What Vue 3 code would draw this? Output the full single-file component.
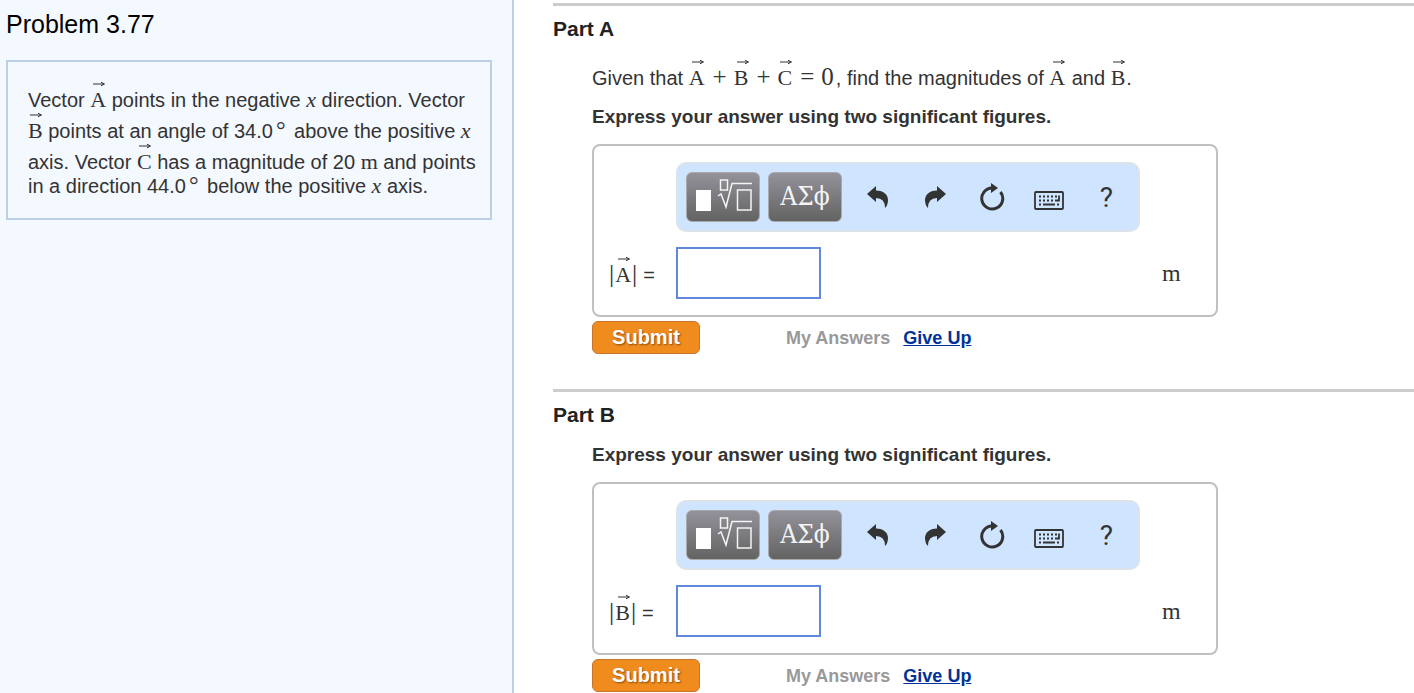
<template>
  <div class="page">
    <aside class="sidebar">
      <h1 class="sidebar__title">Problem 3.77</h1>
      <p class="sidebar__text">
        Vector <span class="vec">A<svg class="vec__arrow" viewBox="0 0 12 6"><path d="M0 3H10M8 1.2L11.5 3L8 4.8" /></svg></span>
        points in the negative <i class="math">x</i> direction. Vector
        <span class="vec">B<svg class="vec__arrow" viewBox="0 0 12 6"><path d="M0 3H10M8 1.2L11.5 3L8 4.8" /></svg></span>
        points at an angle of 34.0<span class="degree">°</span>
        above the positive <i class="math">x</i> axis. Vector
        <span class="vec">C<svg class="vec__arrow" viewBox="0 0 12 6"><path d="M0 3H10M8 1.2L11.5 3L8 4.8" /></svg></span>
        has a magnitude of 20 <span class="math">m</span> and points in a direction 44.0<span class="degree">°</span>
        below the positive <i class="math">x</i> axis.
      </p>
    </aside>

    <main class="content">
      <section v-for="part in parts" :key="part.name" class="part">
        <h2 class="part__title">Part {{ part.name }}</h2>
        <div class="part__body">
          <p v-if="part.name === 'A'" class="part__question">
            Given that
            <span class="equation">
              <template v-for="(letter, i) in ['A', 'B', 'C']" :key="letter">
                <span v-if="i > 0">+</span>
                <span class="vec">{{ letter }}<svg class="vec__arrow" viewBox="0 0 12 6"><path d="M0 3H10M8 1.2L11.5 3L8 4.8" /></svg></span>
              </template>
              <span>=</span><span>0</span>
            </span>, find the magnitudes of
            <span class="vec">A<svg class="vec__arrow" viewBox="0 0 12 6"><path d="M0 3H10M8 1.2L11.5 3L8 4.8" /></svg></span>
            and
            <span class="vec">B<svg class="vec__arrow" viewBox="0 0 12 6"><path d="M0 3H10M8 1.2L11.5 3L8 4.8" /></svg></span>.
          </p>
          <p class="part__hint">Express your answer using two significant figures.</p>

          <form :id="'form-' + part.name" class="answer" @submit.prevent>
            <div class="toolbar">
              <button type="button" class="toolbar__key" aria-label="Templates">
                <svg width="58" height="36" viewBox="0 0 58 36" fill="none" stroke="#f4f4f4" stroke-width="1.5">
                  <rect x="2" y="12" width="15" height="21" fill="#fff" stroke="none" />
                  <rect x="26.500" y="2" width="7" height="10" />
                  <path d="M24 18l3-2 5 13L38 5.500H58" />
                  <rect x="43.500" y="12" width="13.500" height="20" />
                </svg>
              </button>
              <button type="button" class="toolbar__key">ΑΣϕ</button>
              <div class="toolbar__icons">
                <button type="button" class="toolbar__icon" aria-label="Undo">
                  <svg width="22" height="24" viewBox="0 0 22 24"><path d="M0 9L9 1V5.500C17 5.500 21 10 21 15Q21 20 18 23Q18 13 9 13V17Z" /></svg>
                </button>
                <button type="button" class="toolbar__icon" aria-label="Redo">
                  <svg width="22" height="24" viewBox="0 0 22 24"><path d="M22 9L13 1V5.500C5 5.500 1 10 1 15Q1 20 4 23Q4 13 13 13V17Z" /></svg>
                </button>
                <button type="button" class="toolbar__icon" aria-label="Reset">
                  <svg width="26" height="28" viewBox="0 0 26 28">
                    <path d="M13 5A10.500 10.500 0 1 0 21.500 9" fill="none" stroke="#333" stroke-width="3" />
                    <path d="M12 0L19 5L12 10Z" />
                  </svg>
                </button>
                <button type="button" class="toolbar__icon" aria-label="Keyboard">
                  <svg class="keyboard" width="30" height="19" viewBox="0 0 30 19">
                    <rect x="1" y="1" width="28" height="17" rx="1" fill="none" stroke="#333" stroke-width="1.8" />
                    <path d="M5 5.500H23M5 9.500H22M5 13.500H7M23 13.500H25" fill="none" stroke="#333" stroke-width="2" stroke-dasharray="2 2" />
                    <path d="M9 13.500H21M22 9.500H25V4.500" fill="none" stroke="#333" stroke-width="1.8" />
                  </svg>
                </button>
                <button type="button" class="toolbar__icon toolbar__icon--help" aria-label="Help">?</button>
              </div>
            </div>
            <label class="answer__label" :for="'answer-' + part.name">
              <span class="bar">|</span><span class="vec">{{ part.name }}<svg class="vec__arrow" viewBox="0 0 12 6"><path d="M0 3H10M8 1.2L11.5 3L8 4.8" /></svg></span><span class="bar">|</span>
              <span class="equals">=</span>
            </label>
            <input :id="'answer-' + part.name" v-model="part.answer" class="answer__input" type="text">
            <span class="answer__unit">m</span>
          </form>

          <div class="actions">
            <button type="submit" :form="'form-' + part.name" class="actions__submit">Submit</button>
            <span class="actions__answers">My Answers</span>
            <a class="actions__link" href="#">Give Up</a>
          </div>
        </div>
      </section>
    </main>
  </div>
</template>

<script setup>
import { reactive } from 'vue'

const parts = reactive([
  { name: 'A', answer: '' },
  { name: 'B', answer: '' },
])
</script>

<style>
body {
  margin: 0;
  background: #fff;
}
</style>

<style scoped>
.page {
  display: flex;
  min-height: 100vh;
  font-family: "Liberation Sans", Arial, sans-serif;
  font-size: 20px;
  line-height: 24px;
  color: #333;
}
.page * { box-sizing: border-box; }
.sidebar {
  flex: none;
  width: 36.35%;
  padding: 8px 20px 8px 6px;
  background: #f4f8ff;
  border-right: 2px solid #bccfe3;
}
.sidebar__title {
  margin: 0 0 20px;
  font-size: 25px;
  font-weight: 400;
  line-height: 32px;
  color: #000;
}
.sidebar__text {
  margin: 0;
  padding: 19px 6px 20px 20px;
  border: 2px solid #bccfe3;
}
.math,
.vec,
.equation {
  font-family: "Liberation Serif", "Times New Roman", serif;
  font-size: 22px;
  line-height: 24px;
}
.math { line-height: 20px; }
.vec {
  position: relative;
  display: inline-block;
  padding: 7px 0 0;
}
.vec__arrow {
  position: absolute;
  top: 0;
  left: 50%;
  width: 12px;
  height: 6px;
  margin-left: -5px;
  fill: none;
  stroke: #333;
}
.degree {
  margin: 0 3px;
  font-family: "Liberation Serif", "Times New Roman", serif;
  font-size: 24px;
  line-height: 16px;
}
.equation {
  display: inline-flex;
  align-items: baseline;
  gap: 7px;
  padding-right: 2px;
  font-size: 25px;
}

.content {
  flex: 1;
  min-width: 0;
  padding: 3px 0 0 39px;
}
.part {
  padding-bottom: 35px;
  border-top: 3px solid #ccc;
}
.part:last-child { padding-bottom: 0; }
.part__title {
  margin: 0;
  padding: 11px 0;
  font-size: 21px;
  line-height: 24px;
  color: #222;
}
.part__body {
  max-width: 665px;
  padding: 0 0 0 39px;
}
.part__question { margin: 7px 0 10px; }
.part__hint {
  margin: 0 0 15px;
  padding-top: 5px;
  font-size: 19px;
  font-weight: 700;
}
.part__question .vec { padding-right: 1px; }
.answer {
  display: grid;
  grid-template-columns: 82px minmax(0, 464px) auto;
  align-items: center;
  row-gap: 15px;
  padding: 16px 0;
  border: 2px solid #c0c0c0;
  border-radius: 8px;
}
.toolbar {
  grid-column: 2;
  display: flex;
  gap: 8px;
  padding: 8px 3px 8px 8px;
  background: #cfe5ff;
  border: 2px solid #dce3ea;
  border-radius: 10px;
}
.toolbar__key {
  display: flex;
  align-items: center;
  justify-content: center;
  width: 74px;
  height: 50px;
  padding: 0 0 3px;
  border: 1px solid #aaa;
  border-radius: 6px;
  background: linear-gradient(#93929a, #636363);
  font-family: "DejaVu Serif Condensed", "DejaVu Serif", serif;
  font-size: 26px;
  color: #f4f4f4;
}
.toolbar__icons {
  flex: 1;
  display: flex;
}
.toolbar__icon {
  flex: 1;
  display: flex;
  align-items: center;
  justify-content: center;
  padding: 0;
  border: none;
  background: none;
  color: #333;
  fill: #333;
}
.toolbar__icon--help {
  font-family: Roboto, sans-serif;
  font-size: 28px;
}
.keyboard { margin-top: 6px; }
.answer__label {
  grid-column: 1;
  padding: 0 0 4px 15px;
  white-space: nowrap;
}
.answer__label .vec { padding: 7px 1px 0; }
.bar {
  font-family: "Liberation Serif", "Times New Roman", serif;
  font-size: 26px;
}
.equals { margin-left: 6px; }
.answer__input {
  width: 145px;
  height: 52px;
  padding: 0 8px;
  border: 2px solid #6189db;
  font: inherit;
}
.answer__unit {
  padding-left: 22px;
  font-family: "Liberation Serif", "Times New Roman", serif;
  font-size: 24px;
}
.actions {
  display: flex;
  align-items: center;
  margin-top: 4px;
  font-size: 18px;
  font-weight: 700;
}
.actions__submit {
  width: 108px;
  height: 33px;
  padding: 0 0 2px;
  border: 1px solid #c8742b;
  border-radius: 6px;
  background: #f08c1e;
  font: inherit;
  font-size: 20px;
  color: #fff;
  text-shadow: 1px 1px 2px #8a4a08;
}
.actions__answers {
  margin: 0 13px 0 86px;
  color: #999;
}
.actions__link { color: #039; }
</style>
